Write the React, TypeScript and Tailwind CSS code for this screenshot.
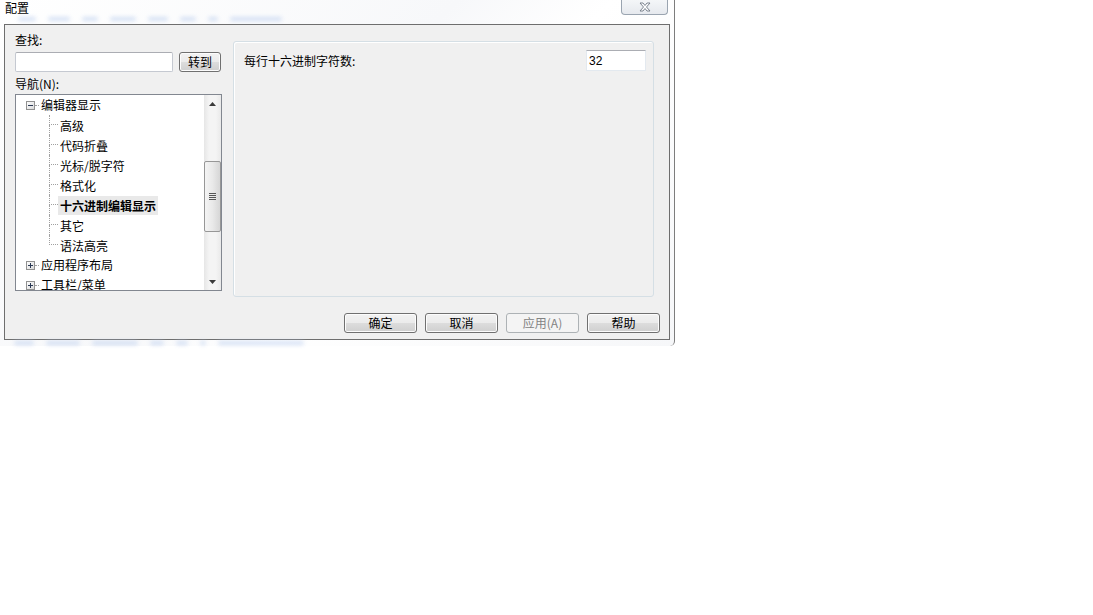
type Node = {
  label: string
  level: 0 | 1
  expander?: "+" | "-"
  selected?: boolean
  last?: boolean
}

const nodes: Node[] = [
  { label: "编辑器显示", level: 0, expander: "-" },
  { label: "高级", level: 1 },
  { label: "代码折叠", level: 1 },
  { label: "光标/脱字符", level: 1 },
  { label: "格式化", level: 1 },
  { label: "十六进制编辑显示", level: 1, selected: true },
  { label: "其它", level: 1 },
  { label: "语法高亮", level: 1, last: true },
  { label: "应用程序布局", level: 0, expander: "+" },
  { label: "工具栏/菜单", level: 0, expander: "+" },
]

const btn =
  "h-[20px] border border-[#707070] rounded-[3px] bg-[linear-gradient(to_bottom,#f2f2f2_0%,#ebebeb_50%,#dddddd_50%,#cfcfcf_100%)] flex items-center justify-center leading-none shadow-[inset_0_0_0_1px_#fcfcfc]"

function Expander({ sign }: { sign: "+" | "-" }) {
  return (
    <svg width="9" height="9" viewBox="0 0 9 9" className="shrink-0">
      <defs>
        <linearGradient id={"exp" + sign} x1="0" y1="0" x2="1" y2="1">
          <stop offset="0" stopColor="#ffffff" />
          <stop offset="1" stopColor="#d8d8d8" />
        </linearGradient>
      </defs>
      <rect x="0.5" y="0.5" width="8" height="8" fill={"url(#exp" + sign + ")"} stroke="#919191" />
      <line x1="2" y1="4.5" x2="7" y2="4.5" stroke="#2b3a55" />
      {sign === "+" && <line x1="4.5" y1="2" x2="4.5" y2="7" stroke="#2b3a55" />}
    </svg>
  )
}

function TreeRow({ node }: { node: Node }) {
  if (node.level === 0) {
    return (
      <div className="h-[20px] flex items-center pl-[10px] shrink-0">
        <Expander sign={node.expander ?? "+"} />
        <div className="w-[4px] border-t border-dotted border-[#a0a0a0]" />
        <span className="px-[2px] leading-[18px] whitespace-nowrap">{node.label}</span>
      </div>
    )
  }
  return (
    <div className="h-[20px] flex items-center pl-[33px] shrink-0">
      <div className="w-[9px] h-[20px] flex flex-col shrink-0">
        <div className="h-[10px] border-l border-b border-dotted border-[#a0a0a0]" />
        <div className={"h-[10px] border-l border-dotted " + (node.last ? "border-transparent" : "border-[#a0a0a0]")} />
      </div>
      <span
        className={
          "px-[2px] leading-[19px] whitespace-nowrap " +
          (node.selected ? "bg-[#e9e9e9] font-bold" : "")
        }
      >
        {node.label}
      </span>
    </div>
  )
}

function ScrollBar() {
  return (
    <div className="w-[17px] flex flex-col bg-[linear-gradient(to_right,#e6e6e6,#f4f4f4_30%,#f4f4f4_70%,#e9e9e9)]">
      <div className="h-[17px] flex items-center justify-center">
        <svg width="7" height="4" viewBox="0 0 7 4">
          <path d="M0 4 L3.5 0 L7 4 Z" fill="#3a3a3a" />
        </svg>
      </div>
      <div className="flex-1 flex flex-col">
        <div className="mt-[49px] h-[71px] border border-[#979797] rounded-[2px] bg-[linear-gradient(to_right,#f4f4f4,#e9e9e9_50%,#d6d6d6)] flex flex-col items-center justify-center gap-[1px]">
          <div className="w-[7px] h-[1px] bg-[#555]" />
          <div className="w-[7px] h-[1px] bg-[#555]" />
          <div className="w-[7px] h-[1px] bg-[#555]" />
          <div className="w-[7px] h-[1px] bg-[#555]" />
        </div>
      </div>
      <div className="h-[17px] flex items-center justify-center">
        <svg width="7" height="4" viewBox="0 0 7 4">
          <path d="M0 0 L3.5 4 L7 0 Z" fill="#3a3a3a" />
        </svg>
      </div>
    </div>
  )
}

// faint shapes of the window behind the glass frame
function Backdrop({ widths }: { widths: number[] }) {
  return (
    <div className="flex items-center gap-[12px] opacity-60">
      {widths.map((w, i) => (
        <div key={i} style={{ width: w }} className="h-[4px] rounded-full bg-[#b9cdee] blur-[2px]" />
      ))}
    </div>
  )
}

export default function App() {
  return (
    <div className="w-[1093px] h-[615px] bg-white text-[12px] text-black font-['Noto_Sans_CJK_SC','Noto_Sans',sans-serif]">
      <div className="w-[675px] flex flex-col border-r border-[#7d7d7d] rounded-br-[5px] bg-[linear-gradient(135deg,#ffffff_0%,#f7f8fa_45%,#ffffff_60%,#f6f7f9_100%)] pl-[4px] pr-[4px]">
        <div className="h-[24px] flex justify-between items-start">
          <div className="flex flex-col">
            <span className="pl-[1px] h-[16px] leading-[16px]">配置</span>
            <div className="pl-[14px] pt-[1px]">
              <Backdrop widths={[18, 22, 16, 26, 20, 16, 10, 52]} />
            </div>
          </div>
          <div className="w-[47px] h-[15px] mr-[2px] border border-t-0 border-[#9aa4b0] rounded-b-[4px] bg-[linear-gradient(to_bottom,#f4f6f8,#e6e9ee)] flex items-center justify-center">
            <svg width="12" height="10" viewBox="0 0 12 10">
              <path
                d="M1 1 L4 1 L6 3.5 L8 1 L11 1 L7.5 5 L11 9 L8 9 L6 6.5 L4 9 L1 9 L4.5 5 Z"
                fill="#ffffff"
                stroke="#6f7884"
                strokeWidth="0.9"
                strokeLinejoin="round"
              />
            </svg>
          </div>
        </div>

        <div className="border border-[#6e6e6e] bg-[#f0f0f0] flex flex-col h-[316px]">
          <div className="flex items-start">
            <div className="w-[207px] ml-[10px] pt-[7px] flex flex-col">
              <span className="h-[16px] leading-[16px]">查找:</span>
              <div className="flex items-start mt-[4px]">
                <div className="w-[158px] h-[20px] bg-white border border-[#c5c9d1] border-t-[#abadb3] rounded-[2px]" />
                <button className={btn + " ml-[6px] w-[42px] h-[19px]"}>转到</button>
              </div>
              <span className="h-[16px] leading-[16px] mt-[4px]">导航(N):</span>
              <div className="mt-[2px] h-[197px] border border-[#828790] bg-white flex">
                <div className="flex-1 flex flex-col overflow-hidden">
                  {nodes.map((n) => (
                    <TreeRow key={n.label} node={n} />
                  ))}
                </div>
                <ScrollBar />
              </div>
            </div>

            <div className="ml-[11px] mt-[16px] w-[421px] h-[256px] border border-[#d5dfe5] rounded-[3px] shadow-[inset_1px_1px_0_#ffffff] pt-[8px] pl-[10px] pr-[7px]">
              <div className="flex items-center justify-between h-[21px]">
                <span className="leading-[16px]">每行十六进制字符数:</span>
                <div className="w-[60px] h-[21px] bg-white border border-[#e3e9ef] border-t-[#abadb3] flex items-center pl-[2px] font-['Liberation_Sans',sans-serif] text-[12px]">
                  32
                </div>
              </div>
            </div>
          </div>

          <div className="mt-auto pb-[6px] pr-[9px] flex justify-end gap-[8px]">
            <button className={btn + " w-[73px]"}>确定</button>
            <button className={btn + " w-[73px]"}>取消</button>
            <button className="w-[73px] h-[20px] border border-[#adb2b5] rounded-[3px] bg-[#f4f4f4] text-[#838383] flex items-center justify-center leading-none">
              应用(A)
            </button>
            <button className={btn + " w-[73px]"}>帮助</button>
          </div>
        </div>

        <div className="h-[6px] pl-[10px] flex items-center">
          <Backdrop widths={[20, 34, 46, 14, 12, 6, 86]} />
        </div>
      </div>
    </div>
  )
}
